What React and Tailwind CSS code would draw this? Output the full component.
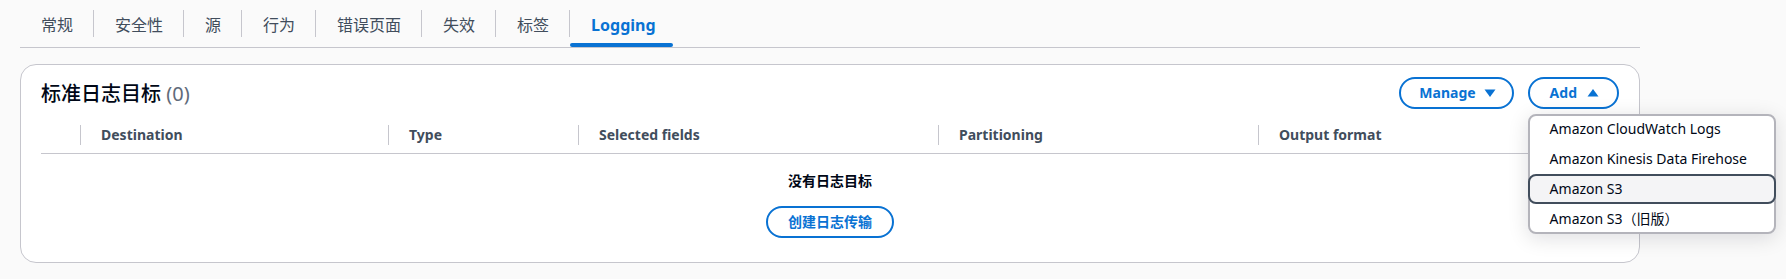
import { useState } from 'react';

const tabs = ['常规', '安全性', '源', '行为', '错误页面', '失效', '标签', 'Logging'];

const columns = [
  { label: '', width: 'w-[39px]' },
  { label: 'Destination', width: 'w-[308px]' },
  { label: 'Type', width: 'w-[190px]' },
  { label: 'Selected fields', width: 'w-[360px]' },
  { label: 'Partitioning', width: 'w-[320px]' },
  { label: 'Output format', width: 'flex-1' },
];

const menuItems = ['Amazon CloudWatch Logs', 'Amazon Kinesis Data Firehose', 'Amazon S3', 'Amazon S3（旧版）'];

const CaretDown = () => (
  <svg viewBox="0 0 16 16" className="w-4 h-4" fill="currentColor">
    <path d="M2.5 4.5h11L8 12z" />
  </svg>
);

const CaretUp = () => (
  <svg viewBox="0 0 16 16" className="w-4 h-4" fill="currentColor">
    <path d="M2.5 11.5h11L8 4z" />
  </svg>
);

const App = () => {
  const [active] = useState(7);
  const [hovered] = useState(2);

  return (
    <div
      className="min-h-[279px] bg-[#fafafa] text-[#000716]"
      style={{ fontFamily: '"Noto Sans", "Noto Sans CJK SC", sans-serif' }}
    >
      <div className="w-[1620px] ml-5">
        {/* Tabs */}
        <div className="flex items-center border-b border-[#c6c6cd]">
          {tabs.map((tab, idx) => (
            <div key={tab} className="flex items-center">
              {idx > 0 && <div className="w-px h-[27px] bg-[#c6c6cd]" />}
              <div
                className={`relative h-[47px] flex items-center pt-[2px] pl-[21px] text-base leading-5 ${
                  idx === active ? 'pr-[17px] text-[#0972d3] font-bold' : 'pr-[20px] text-[#414d5c]'
                }`}
              >
                {tab}
                {idx === active && (
                  <div className="absolute left-0 right-0 bottom-0 h-1 rounded-full bg-[#0972d3]" />
                )}
              </div>
            </div>
          ))}
        </div>

        {/* Container */}
        <div className="mt-4 bg-white border border-[#c6c6cd] rounded-2xl px-5 pt-3 pb-6">
          <div className="flex items-center justify-between">
            <h2 className="text-[20px] leading-7 font-medium pt-[2px]">
              标准日志目标 <span className="font-normal text-[#5f6b7a]">(0)</span>
            </h2>
            <div className="flex gap-[14px]">
              <button className="h-8 flex items-center gap-[6px] pl-[18px] pr-[14px] rounded-full border-2 border-[#0972d3] text-[#0972d3] text-sm font-bold">
                Manage <CaretDown />
              </button>
              <div className="relative">
                <button className="h-8 flex items-center gap-[8px] pl-[20px] pr-[16px] rounded-full border-2 border-[#0972d3] text-[#0972d3] text-sm font-bold">
                  Add <CaretUp />
                </button>
                {/* Dropdown */}
                <div className="absolute z-10 left-0 top-[37px] w-[248px] bg-white border-2 border-[#b4b4bb] rounded-lg shadow-[0_4px_20px_1px_rgba(0,7,22,0.12)]">
                  <div className="-my-[2px]">
                    {menuItems.map((item, idx) => (
                      <div
                        key={item}
                        className={`-mx-[2px] h-[30px] flex items-center pl-5 border-2 rounded-lg text-sm ${
                          idx === hovered ? 'border-[#414d5c] bg-[#f4f4f6]' : 'border-transparent'
                        }`}
                      >
                        {item}
                      </div>
                    ))}
                  </div>
                </div>
              </div>
            </div>
          </div>

          {/* Table header */}
          <div className="mt-[6px] flex border-b border-[#c6c6cd] pt-[10px] pb-[8px]">
            {columns.map((col, idx) => (
              <div key={idx} className={`${col.width} flex items-center`}>
                {idx > 0 && <div className="w-px h-5 bg-[#c6c6cd]" />}
                {col.label && (
                  <span className="pl-[20px] text-sm leading-5 font-bold text-[#414d5c]">{col.label}</span>
                )}
              </div>
            ))}
          </div>

          {/* Empty state */}
          <div className="flex flex-col items-center pt-[17px]">
            <p className="text-sm leading-5 font-bold">没有日志目标</p>
            <button className="mt-[15px] h-8 px-5 rounded-full border-2 border-[#0972d3] text-[#0972d3] text-sm font-bold">
              创建日志传输
            </button>
          </div>
        </div>
      </div>
    </div>
  );
};

export default App;
